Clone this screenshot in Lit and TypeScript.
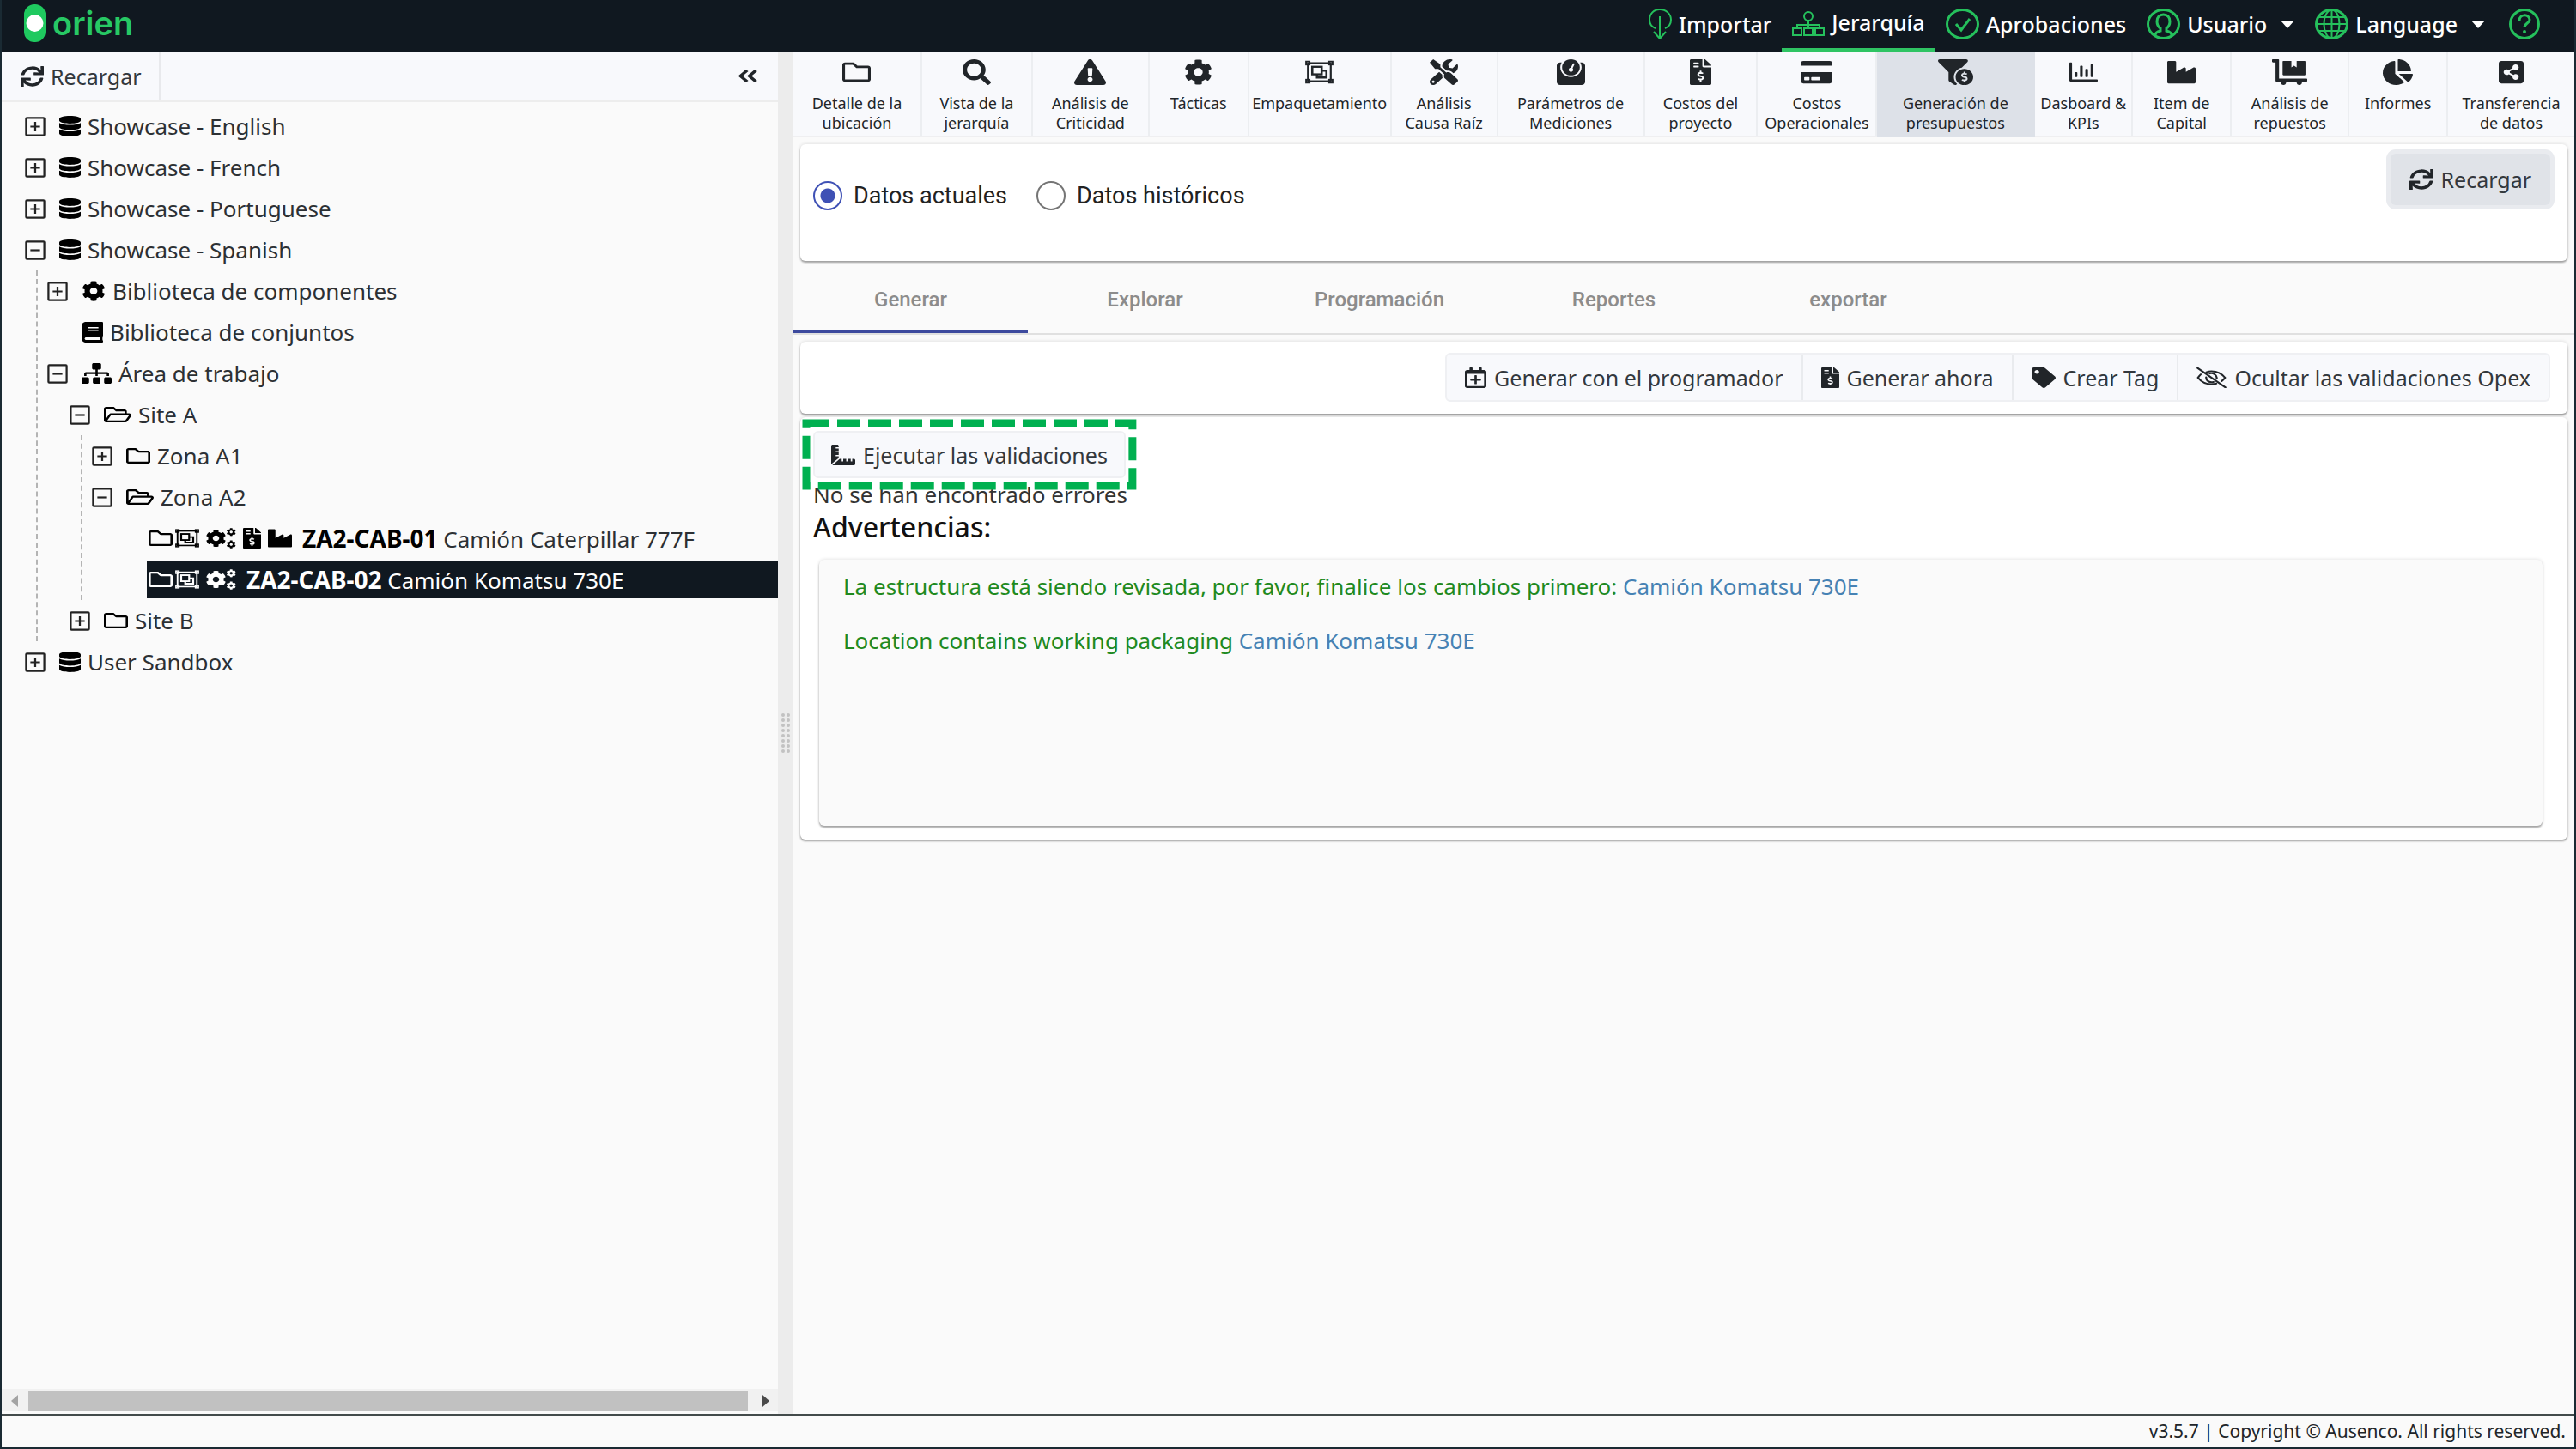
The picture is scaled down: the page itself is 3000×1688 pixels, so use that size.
import { LitElement, html, svg, css, nothing, TemplateResult } from "lit";
import { customElement } from "lit/decorators.js";
import { classMap } from "lit/directives/class-map.js";

type Glyph = { w: number; h?: number; body: TemplateResult };

const gear =
  "M487.4 315.7l-42.6-24.6c4.3-23.2 4.3-47 0-70.2l42.6-24.6c4.9-2.8 7.1-8.6 5.5-14-11.1-35.6-30-67.8-54.7-94.6-3.8-4.1-10-5.1-14.8-2.3L380.8 110c-17.9-15.4-38.5-27.3-60.8-35.1V25.8c0-5.6-3.9-10.5-9.4-11.7-36.7-8.2-74.3-7.8-109.2 0-5.5 1.2-9.4 6.1-9.4 11.7V75c-22.2 7.9-42.8 19.8-60.8 35.1L88.7 85.5c-4.9-2.8-11-1.9-14.8 2.3-24.7 26.7-43.6 58.9-54.7 94.6-1.7 5.4.6 11.2 5.5 14L67.3 221c-4.3 23.2-4.3 47 0 70.2l-42.6 24.6c-4.9 2.8-7.1 8.6-5.5 14 11.1 35.6 30 67.8 54.7 94.6 3.8 4.1 10 5.1 14.8 2.3l42.6-24.6c17.9 15.4 38.5 27.3 60.8 35.1v49.2c0 5.6 3.9 10.5 9.4 11.7 36.7 8.2 74.3 7.8 109.2 0 5.5-1.2 9.4-6.1 9.4-11.7v-49.2c22.2-7.9 42.8-19.8 60.8-35.1l42.6 24.6c4.9 2.8 11 1.9 14.8-2.3 24.7-26.7 43.6-58.9 54.7-94.6 1.5-5.5-.7-11.3-5.6-14.1zM256 336c-44.1 0-80-35.9-80-80s35.9-80 80-80 80 35.9 80 80-35.9 80-80 80z";

const p = (d: string) => svg`<path d=${d}></path>`;

const glyphs: Record<string, Glyph> = {
  database: { w: 448, body: p("M448 73.143v45.714C448 159.143 347.667 192 224 192S0 159.143 0 118.857V73.143C0 32.857 100.333 0 224 0s224 32.857 224 73.143zM448 176v102.857C448 319.143 347.667 352 224 352S0 319.143 0 278.857V176c48.125 33.143 136.208 48.572 224 48.572S399.874 209.143 448 176zm0 160v102.857C448 479.143 347.667 512 224 512S0 479.143 0 438.857V336c48.125 33.143 136.208 48.572 224 48.572S399.874 369.143 448 336z") },
  cog: { w: 512, body: p(gear) },
  cogs: {
    w: 640,
    body: svg`<g transform="translate(-10 36) scale(.86)"><path d=${gear}></path></g>
      <g transform="translate(432 0) scale(.4)"><path d=${gear}></path></g>
      <g transform="translate(432 306) scale(.4)"><path d=${gear}></path></g>`,
  },
  book: { w: 448, body: p("M448 360V24c0-13.3-10.7-24-24-24H96C43 0 0 43 0 96v320c0 53 43 96 96 96h328c13.3 0 24-10.7 24-24v-16c0-7.5-3.5-14.3-8.9-18.7-4.2-15.4-4.2-59.3 0-74.7 5.4-4.3 8.9-11.1 8.9-18.6zM128 134c0-3.3 2.7-6 6-6h212c3.3 0 6 2.7 6 6v20c0 3.3-2.7 6-6 6H134c-3.3 0-6-2.7-6-6v-20zm0 64c0-3.3 2.7-6 6-6h212c3.3 0 6 2.7 6 6v20c0 3.3-2.7 6-6 6H134c-3.3 0-6-2.7-6-6v-20zm253.4 250H96c-17.7 0-32-14.3-32-32 0-17.6 14.4-32 32-32h285.4c-1.9 17.1-1.9 46.9 0 64z") },
  sitemap: { w: 640, body: p("M128 352H32c-17.67 0-32 14.33-32 32v96c0 17.67 14.33 32 32 32h96c17.67 0 32-14.33 32-32v-96c0-17.67-14.33-32-32-32zm-24-80h192v48h48v-48h192v48h48v-57.59c0-21.17-17.23-38.41-38.41-38.41H344v-64h40c17.67 0 32-14.33 32-32V32c0-17.67-14.33-32-32-32H256c-17.67 0-32 14.33-32 32v96c0 17.67 14.33 32 32 32h40v64H94.41C73.23 224 56 241.23 56 262.41V320h48v-48zm264 80h-96c-17.67 0-32 14.33-32 32v96c0 17.67 14.33 32 32 32h96c17.67 0 32-14.33 32-32v-96c0-17.67-14.33-32-32-32zm240 0h-96c-17.67 0-32 14.33-32 32v96c0 17.67 14.33 32 32 32h96c17.67 0 32-14.33 32-32v-96c0-17.67-14.33-32-32-32z") },
  folder: { w: 512, body: p("M464 128H272l-54.63-54.63c-6-6-14.14-9.37-22.63-9.37H48C21.49 64 0 85.49 0 112v288c0 26.51 21.49 48 48 48h416c26.51 0 48-21.49 48-48V176c0-26.51-21.49-48-48-48zm0 272H48V112h140.12l54.63 54.63c6 6 14.14 9.37 22.63 9.37H464v224z") },
  folderOpen: { w: 576, body: p("M527.9 224H480v-48c0-26.5-21.5-48-48-48H272l-64-64H48C21.5 64 0 85.5 0 112v288c0 26.5 21.5 48 48 48h400c16.5 0 31.9-8.5 40.7-22.6l79.9-128c20-31.9-3-73.4-40.7-73.4zM48 118c0-3.3 2.7-6 6-6h134.1l64 64H426c3.3 0 6 2.7 6 6v42H152c-16.8 0-32.4 8.8-41.1 23.2L48 351.4zm400 282H72l77.2-128H528z") },
  group: {
    w: 512,
    body: svg`<g fill="none" stroke="currentColor" stroke-width="34">
      <rect x="50" y="76" width="412" height="360"></rect>
      <rect x="128" y="150" width="170" height="150" stroke-width="40"></rect>
      <path d="M300 226h84v136H214v-62" stroke-width="40"></path></g>
      <g fill="none" stroke="currentColor" stroke-width="30">
      <rect x="17" y="45" width="62" height="62"></rect><rect x="433" y="45" width="62" height="62"></rect>
      <rect x="17" y="405" width="62" height="62"></rect><rect x="433" y="405" width="62" height="62"></rect></g>`,
  },
  invoice: { w: 384, body: p("M377 105L279.1 7c-4.5-4.5-10.6-7-17-7H256v128h128v-6.1c0-6.3-2.5-12.4-7-16.9zm-153 31V0H24C10.7 0 0 10.7 0 24v464c0 13.3 10.7 24 24 24h336c13.3 0 24-10.7 24-24V160H248c-13.2 0-24-10.8-24-24zM64 72c0-4.42 3.58-8 8-8h80c4.42 0 8 3.58 8 8v16c0 4.42-3.58 8-8 8H72c-4.42 0-8-3.58-8-8V72zm0 80v-16c0-4.42 3.58-8 8-8h80c4.42 0 8 3.58 8 8v16c0 4.42-3.58 8-8 8H72c-4.42 0-8-3.58-8-8zm144 263.88V440c0 4.42-3.58 8-8 8h-16c-4.42 0-8-3.58-8-8v-24.29c-11.29-.58-22.27-4.52-31.37-11.35-3.9-2.93-4.1-8.77-.57-12.14l11.75-11.21c2.77-2.64 6.89-2.76 10.13-.73 3.87 2.42 8.26 3.72 12.82 3.72h28.11c6.5 0 11.8-5.92 11.8-13.19 0-5.95-3.61-11.19-8.77-12.73l-45-13.5c-18.59-5.58-31.58-23.42-31.58-43.39 0-24.52 19.05-44.44 42.67-45.07V232c0-4.42 3.58-8 8-8h16c4.42 0 8 3.58 8 8v24.29c11.29.58 22.27 4.51 31.37 11.35 3.9 2.93 4.1 8.77.57 12.14l-11.75 11.21c-2.77 2.64-6.89 2.76-10.13.73-3.87-2.43-8.26-3.72-12.82-3.72h-28.11c-6.5 0-11.8 5.92-11.8 13.19 0 5.95 3.61 11.19 8.77 12.73l45 13.5c18.59 5.58 31.58 23.42 31.58 43.39 0 24.53-19.05 44.44-42.67 45.07z") },
  industry: { w: 512, body: p("M475.115 163.781L336 252.309v-68.28c0-18.916-20.931-30.399-36.885-20.248L160 252.309V56c0-13.255-10.745-24-24-24H24C10.745 32 0 42.745 0 56v400c0 13.255 10.745 24 24 24h464c13.255 0 24-10.745 24-24V184.029c0-18.917-20.931-30.399-36.885-20.248z") },
  sync: { w: 512, body: p("M440.65 12.57l4 82.77A247.16 247.16 0 0 0 255.83 8C134.73 8 33.91 94.92 12.29 209.82A12 12 0 0 0 24.09 224h49.05a12 12 0 0 0 11.67-9.26 175.91 175.91 0 0 1 317-56.94l-101.46-4.86a12 12 0 0 0-12.57 12v47.41a12 12 0 0 0 12 12H500a12 12 0 0 0 12-12V12a12 12 0 0 0-12-12h-47.37a12 12 0 0 0-11.98 12.57zM255.83 432a175.61 175.61 0 0 1-146-77.8l101.8 4.87a12 12 0 0 0 12.57-12v-47.4a12 12 0 0 0-12-12H12a12 12 0 0 0-12 12V500a12 12 0 0 0 12 12h47.35a12 12 0 0 0 12-12.6l-4.15-82.57A247.17 247.17 0 0 0 255.83 504c121.11 0 221.93-86.92 243.55-201.82a12 12 0 0 0-11.8-14.18h-49.05a12 12 0 0 0-11.67 9.26A175.86 175.86 0 0 1 255.83 432z") },
  search: { w: 512, body: p("M505 442.7L405.3 343c-4.5-4.5-10.6-7-17-7H372c27.6-35.3 44-79.7 44-128C416 93.1 322.9 0 208 0S0 93.1 0 208s93.1 208 208 208c48.3 0 92.7-16.4 128-44v16.3c0 6.4 2.5 12.5 7 17l99.7 99.7c9.4 9.4 24.6 9.4 33.9 0l28.3-28.3c9.4-9.4 9.4-24.6.1-34zM208 336c-70.7 0-128-57.2-128-128 0-70.7 57.2-128 128-128 70.7 0 128 57.2 128 128 0 70.7-57.2 128-128 128z") },
  warning: { w: 576, body: p("M569.517 440.013C587.975 472.007 564.806 512 527.94 512H48.054c-36.937 0-59.999-40.055-41.577-71.987L246.423 23.985c18.467-32.009 64.72-31.951 83.154 0l239.94 416.028zM288 354c-25.405 0-46 20.595-46 46s20.595 46 46 46 46-20.595 46-46-20.595-46-46-46zm-43.673-165.346l7.418 136c.347 6.364 5.609 11.346 11.982 11.346h48.546c6.373 0 11.635-4.982 11.982-11.346l7.418-136c.375-6.874-5.098-12.654-11.982-12.654h-63.383c-6.884 0-12.356 5.78-11.981 12.654z") },
  tools: { w: 512, body: p("M501.1 395.7L384 278.6c-23.1-23.1-57.6-27.6-85.4-13.9L192 158.1V96L64 0 0 64l96 128h62.1l106.6 106.6c-13.6 27.8-9.2 62.3 13.9 85.4l117.1 117.1c14.6 14.6 38.2 14.6 52.7 0l52.7-52.7c14.5-14.6 14.5-38.2 0-52.7zM331.7 225c28.3 0 54.9 11 74.9 31l19.4 19.4c15.8-6.9 30.8-16.5 43.8-29.5 37.1-37.1 49.7-89.3 37.9-136.7-2.2-9-13.5-12.1-20.1-5.5l-74.4 74.4-67.9-11.3L334 98.9l74.4-74.4c6.6-6.6 3.4-17.9-5.7-20.2-47.4-11.7-99.6.9-136.6 37.9-28.5 28.5-41.9 66.1-41.2 103.6l82.1 82.1c8.1-1.9 16.5-2.9 24.7-2.9zm-103.9 82l-56.7-56.7L18.7 402.8c-25 25-25 65.5 0 90.5s65.5 25 90.5 0l123.6-123.6c-7.6-19.9-9.9-41.6-5-62.7zM64 472c-13.2 0-24-10.8-24-24 0-13.3 10.7-24 24-24s24 10.7 24 24c0 13.2-10.7 24-24 24z") },
  weight: { w: 512, body: p("M448 64h-25.98C438.44 92.28 448 125.01 448 160c0 105.87-86.13 192-192 192S64 265.87 64 160c0-34.99 9.56-67.72 25.98-96H64C28.71 64 0 92.71 0 128v320c0 35.29 28.71 64 64 64h384c35.29 0 64-28.71 64-64V128c0-35.29-28.71-64-64-64zM256 320c88.37 0 160-71.63 160-160S344.37 0 256 0 96 71.63 96 160s71.63 160 160 160zm-.3-151.94l33.58-78.36c3.5-8.17 12.94-11.92 21.03-8.41 8.12 3.48 11.88 12.89 8.41 21l-33.67 78.55C291.73 188 296 197.45 296 208c0 22.09-17.91 40-40 40s-40-17.91-40-40c0-21.98 17.76-39.77 39.7-39.94z") },
  card: { w: 576, body: p("M0 432c0 26.5 21.5 48 48 48h480c26.5 0 48-21.5 48-48V256H0v176zm192-68c0-6.6 5.4-12 12-12h136c6.6 0 12 5.4 12 12v40c0 6.6-5.4 12-12 12H204c-6.6 0-12-5.4-12-12v-40zm-128 0c0-6.6 5.4-12 12-12h72c6.6 0 12 5.4 12 12v40c0 6.6-5.4 12-12 12H76c-6.6 0-12-5.4-12-12v-40zM576 80v48H0V80c0-26.5 21.5-48 48-48h480c26.5 0 48 21.5 48 48z") },
  funnel: { w: 640, body: p("M433.46 165.94l101.2-111.87C554.61 34.12 540.48 0 512.26 0H31.74C3.52 0-10.61 34.12 9.34 54.07L192 256v155.92c0 12.59 5.93 24.44 16 32l79.99 60c20.86 15.64 48.47 6.97 59.22-13.57C310.8 455.38 288 406.35 288 352c0-89.79 62.05-165.17 145.46-186.06zM480 192c-88.37 0-160 71.63-160 160s71.63 160 160 160 160-71.63 160-160-71.63-160-160-160zm16 239.88V448c0 4.42-3.58 8-8 8h-16c-4.42 0-8-3.58-8-8v-16.29c-11.29-.58-22.27-4.52-31.37-11.35-3.9-2.93-4.1-8.77-.57-12.14l11.75-11.21c2.77-2.64 6.89-2.76 10.13-.73 3.87 2.42 8.26 3.72 12.82 3.72h28.11c6.5 0 11.8-5.92 11.8-13.19 0-5.95-3.61-11.19-8.77-12.73l-45-13.5c-18.59-5.58-31.58-23.42-31.58-43.39 0-24.52 19.05-44.44 42.67-45.07V256c0-4.42 3.58-8 8-8h16c4.42 0 8 3.58 8 8v16.29c11.29.58 22.27 4.51 31.37 11.35 3.9 2.93 4.1 8.77.57 12.14l-11.75 11.21c-2.77 2.64-6.89 2.76-10.13.73-3.87-2.43-8.26-3.72-12.82-3.72h-28.11c-6.5 0-11.8 5.92-11.8 13.19 0 5.95 3.61 11.19 8.77 12.73l45 13.5c18.59 5.58 31.58 23.42 31.58 43.39 0 24.53-19.04 44.44-42.67 45.07z") },
  bars: { w: 512, body: p("M396.8 352h22.4c6.4 0 12.8-6.4 12.8-12.8V108.8c0-6.4-6.4-12.8-12.8-12.8h-22.4c-6.4 0-12.8 6.4-12.8 12.8v230.4c0 6.4 6.4 12.8 12.8 12.8zm-192 0h22.4c6.4 0 12.8-6.4 12.8-12.8V140.8c0-6.4-6.4-12.8-12.8-12.8h-22.4c-6.4 0-12.8 6.4-12.8 12.8v198.4c0 6.4 6.4 12.8 12.8 12.8zm96 0h22.4c6.4 0 12.8-6.4 12.8-12.8V204.8c0-6.4-6.4-12.8-12.8-12.8h-22.4c-6.4 0-12.8 6.4-12.8 12.8v134.4c0 6.4 6.4 12.8 12.8 12.8zM496 400H48V80c0-8.84-7.16-16-16-16H16C7.16 64 0 71.16 0 80v336c0 17.67 14.33 32 32 32h464c8.84 0 16-7.16 16-16v-16c0-8.84-7.16-16-16-16zm-387.2-48h22.4c6.4 0 12.8-6.4 12.8-12.8v-70.4c0-6.4-6.4-12.8-12.8-12.8h-22.4c-6.4 0-12.8 6.4-12.8 12.8v70.4c0 6.4 6.4 12.8 12.8 12.8z") },
  dolly: { w: 640, body: p("M208 320h384c8.8 0 16-7.2 16-16V48c0-8.8-7.2-16-16-16H448v128l-48-32-48 32V32H208c-8.8 0-16 7.2-16 16v256c0 8.8 7.2 16 16 16zm416 64H128V16c0-8.8-7.2-16-16-16H16C7.2 0 0 7.2 0 16v32c0 8.8 7.2 16 16 16h48v368c0 8.8 7.2 16 16 16h82.9c-1.8 5-2.9 10.4-2.9 16 0 26.5 21.5 48 48 48s48-21.5 48-48c0-5.6-1.2-11-2.9-16H451c-1.8 5-2.9 10.4-2.9 16 0 26.5 21.5 48 48 48s48-21.5 48-48c0-5.6-1.2-11-2.9-16H624c8.8 0 16-7.2 16-16v-32c0-8.8-7.2-16-16-16z") },
  pie: { w: 544, body: p("M527.79 288H290.5l158.03 158.03c6.04 6.04 15.98 6.53 22.19.68 38.7-36.46 65.32-85.61 73.13-140.86 1.34-9.46-6.51-17.85-16.06-17.85zm-15.83-64.8C503.72 103.74 408.26 8.28 288.8.04 279.68-.59 272 7.1 272 16.24V240h223.77c9.14 0 16.82-7.68 16.19-16.8zM224 288V50.71c0-9.55-8.39-17.4-17.84-16.06C86.99 51.49-4.1 155.6.14 280.37 4.5 408.51 114.83 513.59 243.03 511.98c50.4-.63 96.97-16.87 135.26-44.03 7.9-5.6 8.42-17.23 1.57-24.08L224 288z") },
  share: { w: 448, body: p("M448 80v352c0 26.51-21.49 48-48 48H48c-26.51 0-48-21.49-48-48V80c0-26.51 21.49-48 48-48h352c26.51 0 48 21.49 48 48zM304 296c-14.562 0-27.823 5.561-37.783 14.671l-67.958-40.775a56.339 56.339 0 0 0 0-27.793l67.958-40.775C276.177 210.439 289.438 216 304 216c30.928 0 56-25.072 56-56s-25.072-56-56-56-56 25.072-56 56c0 4.797.605 9.453 1.74 13.897l-67.958 40.775C171.823 205.561 158.562 200 144 200c-30.928 0-56 25.072-56 56s25.072 56 56 56c14.562 0 27.823-5.561 37.783-14.671l67.958 40.775a56.088 56.088 0 0 0-1.741 13.896c0 30.928 25.072 56 56 56s56-25.072 56-56S334.928 296 304 296z") },
  calendar: { w: 448, body: p("M336 292v24c0 6.6-5.4 12-12 12h-76v76c0 6.6-5.4 12-12 12h-24c-6.6 0-12-5.4-12-12v-76h-76c-6.6 0-12-5.4-12-12v-24c0-6.6 5.4-12 12-12h76v-76c0-6.6 5.4-12 12-12h24c6.6 0 12 5.4 12 12v76h76c6.6 0 12 5.4 12 12zm112-180v352c0 26.5-21.5 48-48 48H48c-26.5 0-48-21.5-48-48V112c0-26.5 21.5-48 48-48h48V12c0-6.6 5.4-12 12-12h40c6.6 0 12 5.4 12 12v52h128V12c0-6.6 5.4-12 12-12h40c6.6 0 12 5.4 12 12v52h48c26.5 0 48 21.5 48 48zm-48 346V160H48v298c0 3.3 2.7 6 6 6h340c3.3 0 6-2.7 6-6z") },
  tag: { w: 512, body: p("M0 252.118V48C0 21.49 21.49 0 48 0h204.118a48 48 0 0 1 33.941 14.059l211.882 211.882c18.745 18.745 18.745 49.137 0 67.882L293.823 497.941c-18.745 18.745-49.137 18.745-67.882 0L14.059 286.059A48 48 0 0 1 0 252.118zM112 64c-26.51 0-48 21.49-48 48s21.49 48 48 48 48-21.49 48-48-21.49-48-48-48z") },
  ruler: { w: 512, body: p("M160 288h-56c-4.42 0-8-3.58-8-8v-16c0-4.42 3.58-8 8-8h56v-64h-56c-4.42 0-8-3.58-8-8v-16c0-4.42 3.58-8 8-8h56V96h-56c-4.42 0-8-3.58-8-8V72c0-4.42 3.58-8 8-8h56V32c0-17.67-14.33-32-32-32H32C14.33 0 0 14.33 0 32v448c0 2.77.91 5.24 1.57 7.8L160 329.38V288zm320 64h-32v56c0 4.42-3.58 8-8 8h-16c-4.42 0-8-3.58-8-8v-56h-64v56c0 4.42-3.58 8-8 8h-16c-4.42 0-8-3.58-8-8v-56h-64v56c0 4.42-3.58 8-8 8h-16c-4.42 0-8-3.58-8-8v-56h-41.37L24.2 510.43c2.56.66 5.04 1.57 7.8 1.57h448c17.67 0 32-14.33 32-32v-96c0-17.67-14.33-32-32-32z") },
  eyeSlash: {
    w: 640,
    body: svg`<g fill="none" stroke="currentColor" stroke-width="42" stroke-linecap="round">
      <path d="M24 14L616 498"></path>
      <path d="M210 122C244 104 281 94 320 94c118 0 220 62 288 162-20 32-44 60-72 83"></path>
      <path d="M92 174C68 198 48 226 32 256c68 100 170 162 288 162 36 0 70-6 102-17"></path>
      <path d="M206 246c-4 62 40 122 114 124 16 0 30-3 44-9"></path>
      <path d="M282 152c74-22 150 36 150 104 0 8-1 16-3 24"></path></g>`,
  },
  plus: {
    w: 512,
    body: svg`<g fill="none" stroke="currentColor" stroke-width="48">
      <rect x="30" y="30" width="452" height="452" rx="20"></rect><path d="M256 136v240M136 256h240"></path></g>`,
  },
  minus: {
    w: 512,
    body: svg`<g fill="none" stroke="currentColor" stroke-width="48">
      <rect x="30" y="30" width="452" height="452" rx="20"></rect><path d="M136 256h240"></path></g>`,
  },
  chevrons: {
    w: 512,
    body: svg`<path d="M236 60L70 256l166 196M456 60L290 256l166 196" fill="none" stroke="currentColor" stroke-width="84"></path>`,
  },
  import: {
    w: 27, h: 36,
    body: svg`<g fill="none" stroke="currentColor" stroke-width="2">
      <path d="M8 23C3 21 1 17 1 13 1 6 6 1 13 1s13 5 13 12c0 4-2 8-7 10"></path>
      <path d="M13 9v25M6 27l7 8 7-8"></path></g>`,
  },
  hierarchy: {
    w: 38, h: 30,
    body: svg`<g fill="none" stroke="currentColor" stroke-width="2">
      <circle cx="19" cy="6" r="5"></circle><path d="M19 11v9M6 20v-4h26v4"></path>
      <rect x="1" y="20" width="10" height="8"></rect><rect x="14" y="20" width="10" height="8"></rect>
      <rect x="27" y="20" width="10" height="8"></rect></g>`,
  },
  check: {
    w: 39, h: 36,
    body: svg`<g fill="none" stroke="currentColor" stroke-width="3">
      <ellipse cx="19.500" cy="18" rx="18" ry="16.500"></ellipse><path d="M12 18l6 7 10-13"></path></g>`,
  },
  user: {
    w: 39, h: 36,
    body: svg`<g fill="none" stroke="currentColor" stroke-width="3">
      <ellipse cx="19.500" cy="18" rx="18" ry="16.500"></ellipse>
      <path d="M10 31c0-3 2-4 6-5v-3c-3-2-4-5-4-8 0-5 3-8 7.500-8S27 10 27 15c0 3-1 6-4 8v3c4 1 6 2 6 5"></path></g>`,
  },
  globe: {
    w: 39, h: 36,
    body: svg`<g fill="none" stroke="currentColor" stroke-width="2">
      <ellipse cx="19.500" cy="18" rx="18" ry="16.500" stroke-width="3"></ellipse>
      <ellipse cx="19.500" cy="18" rx="9" ry="16.500"></ellipse>
      <path d="M19.500 1v34M1 18h37M4 10h31M4 26h31"></path></g>`,
  },
  help: {
    w: 36, h: 36,
    body: svg`<g fill="none" stroke="currentColor" stroke-width="3">
      <ellipse cx="18" cy="18" rx="16.500" ry="16.500"></ellipse>
      <path d="M12 14c0-8 12-8 12-1 0 4-6 4-6 9"></path><circle cx="18" cy="27" r="1" fill="currentColor" stroke-width="2"></circle></g>`,
  },
};

/* emX / emY: drawn size of 512 glyph units along each axis. */
function icon(name: string, emX = 28, emY = 24) {
  const g = glyphs[name];
  const w = g.h ? g.w : Math.round((g.w / 512) * emX);
  const h = g.h ?? emY;
  return html`<svg class="icon" aria-hidden="true" width=${w} height=${h} viewBox="0 0 ${g.w} ${g.h ?? 512}"
    preserveAspectRatio="none" fill="currentColor">${g.body}</svg>`;
}

const shared = css`
  * { box-sizing: border-box; }
  .icon { flex: none; display: block; }
  button { font: inherit; color: inherit; border: 0; background: none; padding: 0; margin: 0; cursor: pointer; }
  a { color: inherit; text-decoration: none; }
  ul { list-style: none; margin: 0; padding: 0; }
`;

@customElement("top-bar")
class TopBar extends LitElement {
  static styles = [shared, css`
    :host { display: block; }
    .bar { display: flex; justify-content: space-between; height: 60px; padding: 0 28px 0 26px; background: #101820; color: #fff; }
    .brand { display: flex; align-items: center; gap: 8px; height: 54px; font: 600 38px/54px Inter, sans-serif; color: #27c864; }
    .links { display: flex; font-size: 25px; line-height: 32px; font-weight: 500; }
    .link { display: flex; align-items: center; gap: 8px; padding: 4px 12px 4px; border-bottom: 4px solid transparent; white-space: nowrap; }
    .link:last-child { padding-left: 16px; }
    .link.active { border-bottom-color: #2fc463; }
    .link.active .word { padding-bottom: 4px; }
    .link .icon { color: #25c05c; }
    .caret { width: 0; border: 8px solid transparent; border-top: 9px solid #fff; border-bottom: 0; margin-left: 8px; }
  `];
  private links = [
    { icon: "import", text: "Importar" },
    { icon: "hierarchy", text: "Jerarquía", active: true },
    { icon: "check", text: "Aprobaciones" },
    { icon: "user", text: "Usuario", menu: true },
    { icon: "globe", text: "Language", menu: true },
  ];
  render() {
    return html`<header class="bar">
      <a class="brand" href="#">
        <svg class="icon" width="25" height="44" viewBox="0 0 25 44" aria-hidden="true">
          <rect width="25" height="44" rx="12" fill="#1fc95f"></rect>
          <circle cx="12.500" cy="22" r="10" fill="#fff"></circle>
        </svg>
        <span>orien</span>
      </a>
      <nav class="links">
        ${this.links.map((l) => html`<a href="#" class=${classMap({ link: true, active: !!l.active })}>
          ${icon(l.icon)}<span class="word">${l.text}</span>${l.menu ? html`<span class="caret"></span>` : nothing}
        </a>`)}
        <a href="#" class="link" aria-label="?">${icon("help")}</a>
      </nav>
    </header>`;
  }
}

type Node = {
  text: string; code?: string; icons: string[];
  leaf?: boolean; selected?: boolean; guide?: boolean; children?: Node[];
};

const tree: Node[] = [
  { text: "Showcase - English", icons: ["database"] },
  { text: "Showcase - French", icons: ["database"] },
  { text: "Showcase - Portuguese", icons: ["database"] },
  {
    text: "Showcase - Spanish", icons: ["database"], guide: true, children: [
      { text: "Biblioteca de componentes", icons: ["cog"] },
      { text: "Biblioteca de conjuntos", icons: ["book"], leaf: true },
      {
        text: "Área de trabajo", icons: ["sitemap"], children: [
          {
            text: "Site A", icons: ["folderOpen"], guide: true, children: [
              { text: "Zona A1", icons: ["folder"] },
              {
                text: "Zona A2", icons: ["folderOpen"], children: [
                  { code: "ZA2-CAB-01", text: "Camión Caterpillar 777F", icons: ["folder", "group", "cogs", "invoice", "industry"], leaf: true },
                  { code: "ZA2-CAB-02", text: "Camión Komatsu 730E", icons: ["folder", "group", "cogs"], leaf: true, selected: true },
                ],
              },
            ],
          },
          { text: "Site B", icons: ["folder"] },
        ],
      },
    ],
  },
  { text: "User Sandbox", icons: ["database"] },
];

@customElement("location-tree")
class LocationTree extends LitElement {
  static styles = [shared, css`
    :host { display: flex; flex-direction: column; min-width: 0; background: #fafafa; }
    .tools { display: flex; justify-content: space-between; height: 59px; background: #f8f9fc; border-bottom: 2px solid #ededed; color: #33383d; font-size: 25px; }
    .tools .icon { color: #212529; }
    .reload { display: flex; align-items: center; gap: 8px; padding: 0 21px 0 22px; border-right: 2px solid #e8e9ec; }
    .collapse { display: flex; align-items: center; padding: 0 23px; }
    .tree { flex: 1; padding: 4px 0 0 27px; font-size: 26px; }
    .tree ul { margin-left: 13px; padding-left: 11px; border-left: 2px solid transparent; }
    .tree ul.guide { border-left: 2px dashed #b4b4b4; }
    .row { display: flex; align-items: center; height: 48px; }
    .toggle { width: 24px; margin-right: 14px; display: flex; color: #222; }
    .label { display: flex; align-items: center; gap: 8px; flex: 1; height: 44px; padding-left: 2px; white-space: nowrap; color: #2c3034; }
    .label .icon { color: #000; }
    .pair { display: flex; align-items: center; gap: 3px; }
    .code { color: #000; font-weight: 700; font-size: 28px; }
    .coded { padding-left: 4px; }
    .selected, .selected .icon, .selected .code { background: #101820; color: #fff; }
    .scroll { display: flex; align-items: center; height: 26px; background: #f1f1f1; margin-bottom: 3px; padding: 2px 10px 0 11px; gap: 12px; }
    .thumb { flex: 1; height: 23px; background: #c1c1c1; margin-right: 5px; }
    .arrow { width: 8px; height: 14px; color: #a3a3a3; }
    .arrow.end { color: #4a4a4a; }
  `];
  private row(n: Node): TemplateResult {
    const body = n.code
      ? html`<span class="pair">${icon(n.icons[0])}${icon(n.icons[1])}</span>${n.icons.slice(2).map((i) => icon(i))}
          <span class="coded"><span class="code">${n.code}</span> ${n.text}</span>`
      : html`${icon(n.icons[0])}<span>${n.text}</span>`;
    return html`<li>
      <div class="row">
        ${n.leaf ? html`<span class="toggle"></span>`
          : html`<button class="toggle" aria-label=${n.text}>${icon(n.children ? "minus" : "plus", 24, 23)}</button>`}
        <a href="#" class=${classMap({ label: true, selected: !!n.selected })}>${body}</a>
      </div>
      ${n.children ? html`<ul class=${classMap({ guide: !!n.guide })}>${n.children.map((c) => this.row(c))}</ul>` : nothing}
    </li>`;
  }
  render() {
    return html`
      <div class="tools">
        <button class="reload">${icon("sync", 27, 24)}<span>Recargar</span></button>
        <button class="collapse" aria-label="«">${icon("chevrons", 24, 17)}</button>
      </div>
      <ul class="tree">${tree.map((n) => this.row(n))}</ul>
      <div class="scroll">
        <svg class="arrow" viewBox="0 0 8 14" fill="currentColor"><path d="M8 0v14L0 7z"></path></svg>
        <div class="thumb"></div>
        <svg class="arrow end" viewBox="0 0 8 14" fill="currentColor"><path d="M0 0v14l8-7z"></path></svg>
      </div>`;
  }
}

@customElement("section-nav")
class SectionNav extends LitElement {
  static styles = [shared, css`
    :host { display: block; }
    .nav { display: grid; grid-template-columns: 150fr 129fr 136fr 116fr 166fr 124fr 171fr 132fr 139fr 184fr 114fr 115fr 137fr 115fr 147fr;
      height: 100px; background: #f8f9fc; border-bottom: 2px solid #efeff1; color: #212529; }
    .item { display: flex; flex-direction: column; align-items: center; gap: 10px; min-width: 0; padding-top: 9px; border-right: 2px solid #eceef1;
      font-size: 18px; line-height: 23px; text-align: center; white-space: nowrap; }
    .item:last-child { border-right: 0; }
    .item.active { background: #dde1e8; border-color: #dde1e8; margin-bottom: -2px; }
    .line { display: block; }
  `];
  private items: [string, string, string?][] = [
    ["folder", "Detalle de la", "ubicación"], ["search", "Vista de la", "jerarquía"], ["warning", "Análisis de", "Criticidad"],
    ["cog", "Tácticas"], ["group", "Empaquetamiento"], ["tools", "Análisis", "Causa Raíz"], ["weight", "Parámetros de", "Mediciones"],
    ["invoice", "Costos del", "proyecto"], ["card", "Costos", "Operacionales"], ["funnel", "Generación de", "presupuestos"],
    ["bars", "Dasboard &", "KPIs"], ["industry", "Item de", "Capital"], ["dolly", "Análisis de", "repuestos"], ["pie", "Informes"],
    ["share", "Transferencia", "de datos"],
  ];
  render() {
    return html`<nav class="nav">
      ${this.items.map(([i, a, b]) => html`<a href="#" class=${classMap({ item: true, active: i === "funnel" })}>
        ${icon(i, 33, 30)}
        <span><span class="line">${a}</span>${b ? html`<span class="line">${b}</span>` : nothing}</span>
      </a>`)}
    </nav>`;
  }
}

@customElement("budget-view")
class BudgetView extends LitElement {
  static styles = [shared, css`
    :host { display: block; padding: 8px 8px 0; }
    .card { background: #fff; border-radius: 6px; box-shadow: 0 2px 2px rgba(0, 0, 0, .32), 0 0 4px rgba(0, 0, 0, .14); }
    .source { display: flex; justify-content: space-between; align-items: flex-start; height: 136px; padding: 11px 20px 0 15px; }
    .choices { display: flex; gap: 34px; padding-top: 32px; font: 27px/34px Roboto, sans-serif; color: #222; }
    .choice { display: flex; align-items: center; gap: 13px; }
    .choice input { appearance: none; width: 34px; height: 34px; margin: 0; border: 2px solid #757575; border-radius: 50%; }
    .choice input:checked { border-color: #3f51b5; background: radial-gradient(circle, #3f51b5 8px, transparent 9px); }
    .button { display: flex; align-items: center; gap: 9px; font-size: 25px; color: #33383d; white-space: nowrap; }
    .button .icon { color: #212529; }
    .reload { height: 60px; padding: 0 22px; border-radius: 6px; background: #e0e3e8; box-shadow: 0 0 0 5px #e9ebef; }
    .tabs { display: flex; margin: 0 -8px 8px; border-bottom: 2px solid #e0e0e0; padding-top: 1px; }
    .tab { flex: 0 1 273px; height: 83px; padding-top: 8px; border-bottom: 4px solid transparent; font: 500 24px/30px Roboto, sans-serif; color: #8c8c8c; }
    .tab.active { border-color: #3d4a9e; }
    .actions { display: flex; justify-content: flex-end; padding: 13px 20px 14px; margin-bottom: 4px; }
    .group { display: flex; border: 2px solid #eff0f3; border-radius: 6px; background: #f8f9fc; }
    .group .button { height: 53px; padding: 0 21px; border-right: 2px solid #e9ebee; }
    .group .button:last-child { border-right: 0; }
    .results { padding: 16px 15px; }
    .run { position: relative; width: max-content; }
    .run .button { height: 55px; padding: 0 19px; border: 2px solid #eff0f3; border-radius: 6px; background: #f8f9fc; }
    .marker { position: absolute; inset: -9px -8px; width: calc(100% + 16px); height: calc(100% + 18px); overflow: visible; pointer-events: none; }
    .note { margin: 0; font-size: 26px; line-height: 38px; color: #333; }
    .title { margin: 0; font-size: 32px; line-height: 38px; font-weight: 500; color: #111; }
    .list { display: flex; flex-direction: column; gap: 27px; min-height: 310px; margin: 19px 14px 0 7px; padding: 13px 28px; background: #fafafa;
      border-radius: 6px; box-shadow: 0 2px 2px rgba(0, 0, 0, .32), 0 0 4px rgba(0, 0, 0, .14); font-size: 26px; line-height: 36px; color: #1f8a1f; }
    .list a { color: #4682b4; }
  `];
  render() {
    return html`
      <section class="card source">
        <div class="choices">
          <label class="choice"><input type="radio" name="data" checked>Datos actuales</label>
          <label class="choice"><input type="radio" name="data">Datos históricos</label>
        </div>
        <button class="button reload">${icon("sync")}<span>Recargar</span></button>
      </section>
      <div class="tabs" role="tablist">
        ${["Generar", "Explorar", "Programación", "Reportes", "exportar"].map((t, i) =>
          html`<button role="tab" class=${classMap({ tab: true, active: i === 0 })}>${t}</button>`)}
      </div>
      <section class="card actions">
        <div class="group">
          <button class="button">${icon("calendar")}<span>Generar con el programador</span></button>
          <button class="button">${icon("invoice")}<span>Generar ahora</span></button>
          <button class="button">${icon("tag")}<span>Crear Tag</span></button>
          <button class="button">${icon("eyeSlash")}<span>Ocultar las validaciones Opex</span></button>
        </div>
      </section>
      <section class="card results">
        <div class="run">
          <button class="button">${icon("ruler")}<span>Ejecutar las validaciones</span></button>
          <svg class="marker" aria-hidden="true"><rect width="100%" height="100%" fill="none" stroke="#00b050" stroke-width="9" stroke-dasharray="27 9"></rect></svg>
        </div>
        <p class="note">No se han encontrado errores</p>
        <h2 class="title">Advertencias:</h2>
        <ul class="list">
          <li>La estructura está siendo revisada, por favor, finalice los cambios primero: <a href="#">Camión Komatsu 730E</a></li>
          <li>Location contains working packaging <a href="#">Camión Komatsu 730E</a></li>
        </ul>
      </section>`;
  }
}

@customElement("app-root")
class AppRoot extends LitElement {
  static styles = [shared, css`
    :host { display: flex; flex-direction: column; box-sizing: border-box; min-height: 100vh; border: 2px solid #1a2a33; border-top: 0;
      background: #fafafa; font-family: "Noto Sans", "Open Sans", sans-serif; font-size: 24px; line-height: 32px; color: #212529; }
    .main { flex: 1; display: grid; grid-template-columns: 904fr 18px 2074fr; }
    .splitter { display: flex; justify-content: center; padding-top: 771px; background: #ececec; }
    .grip { height: 47px; }
    .content { min-width: 0; background: #fafafa; }
    .footer { border-top: 3px solid #434b4b; height: 39px; padding: 0 10px; text-align: right; font-size: 21px; line-height: 34px; }
  `];
  render() {
    return html`
      <top-bar></top-bar>
      <div class="main">
        <location-tree></location-tree>
        <div class="splitter" role="separator">
          <svg class="grip" width="10" height="47" viewBox="0 0 10 47" fill="#c2c2c2">
            ${[0, 1, 2, 3, 4, 5, 6, 7].map((i) => svg`<circle cx="2" cy=${2 + i * 6} r="2"></circle><circle cx="8" cy=${2 + i * 6} r="2"></circle>`)}
          </svg>
        </div>
        <main class="content"><section-nav></section-nav><budget-view></budget-view></main>
      </div>
      <footer class="footer">v3.5.7 | Copyright © Ausenco. All rights reserved.</footer>`;
  }
}
